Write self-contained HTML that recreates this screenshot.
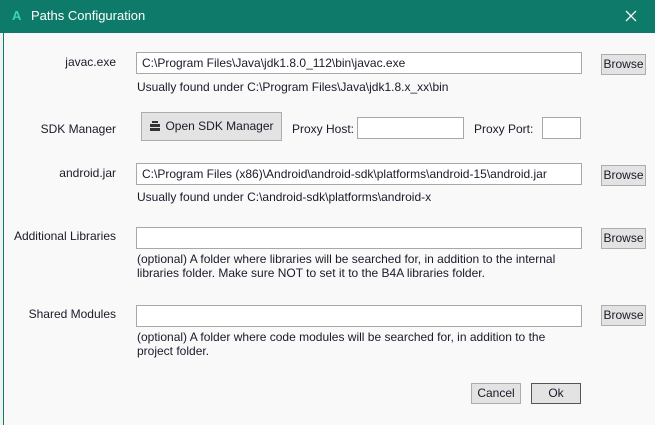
<!DOCTYPE html>
<html><head><meta charset="utf-8"><style>
*{margin:0;padding:0;box-sizing:border-box}
body{width:655px;height:425px;overflow:hidden;background:#f9f9f9;font-family:"Liberation Sans",sans-serif;font-size:12px;color:#1a1a2a;position:relative}
.a{position:absolute;white-space:nowrap}
.title{left:0;top:0;width:655px;height:33px;background:#0e7a69;color:#fff}
.inp{position:absolute;background:#fff;border:1px solid #a8a8a8;height:22px;padding:3px 5px;font-size:12px}
.btn{position:absolute;background:#e3e3e3;border:1px solid #adadad;height:21px;text-align:center;line-height:19px}
.lbl{position:absolute;text-align:right;width:103px;left:13px}
</style></head><body>
<div class="a title">
 <span class="a" style="left:12px;top:8px;font-weight:bold;color:#3ed3b4;font-size:13px">A</span>
 <span class="a" style="left:31px;top:8px;font-size:13px">Paths Configuration</span>
 <svg class="a" style="left:625px;top:10px" width="12" height="12" viewBox="0 0 12 12"><path d="M1 1L11 11M11 1L1 11" stroke="#fff" stroke-width="1.3"/></svg>
</div>
<div class="a" style="left:0;top:33px;width:4px;height:392px;background:#eef2f1;border-right:1px solid #0e7a69"></div>

<div class="lbl" style="top:55px">javac.exe</div>
<div class="inp" style="left:136px;top:52px;width:446px">C:\Program Files\Java\jdk1.8.0_112\bin\javac.exe</div>
<div class="btn" style="left:601px;top:54px;width:45px">Browse</div>
<div class="a" style="left:137px;top:80px">Usually found under C:\Program Files\Java\jdk1.8.x_xx\bin</div>

<div class="lbl" style="top:122px">SDK Manager</div>
<div class="btn" style="left:141px;top:112px;width:141px;height:29px;line-height:27px">
<svg width="12" height="10" viewBox="0 0 12 10" style="vertical-align:-1px;margin-right:4px"><path d="M3 0h6v2H3zM1 3h10v7H1z" fill="#333"/><rect x="1" y="6" width="10" height="1" fill="#e3e3e3"/></svg>Open SDK Manager</div>
<div class="a" style="left:292px;top:122px">Proxy Host:</div>
<div class="inp" style="left:357px;top:117px;width:107px"></div>
<div class="a" style="left:474px;top:122px">Proxy Port:</div>
<div class="inp" style="left:542px;top:117px;width:39px"></div>

<div class="lbl" style="top:166px">android.jar</div>
<div class="inp" style="left:136px;top:163px;width:446px">C:\Program Files (x86)\Android\android-sdk\platforms\android-15\android.jar</div>
<div class="btn" style="left:601px;top:165px;width:45px">Browse</div>
<div class="a" style="left:137px;top:190px">Usually found under C:\android-sdk\platforms\android-x</div>

<div class="lbl" style="top:229px">Additional Libraries</div>
<div class="inp" style="left:136px;top:227px;width:446px"></div>
<div class="btn" style="left:601px;top:228px;width:45px">Browse</div>
<div class="a" style="left:137px;top:252px;line-height:14px">(optional) A folder where libraries will be searched for, in addition to the internal<br>libraries folder. Make sure NOT to set it to the B4A libraries folder.</div>

<div class="lbl" style="top:307px">Shared Modules</div>
<div class="inp" style="left:136px;top:305px;width:446px"></div>
<div class="btn" style="left:601px;top:305px;width:45px">Browse</div>
<div class="a" style="left:137px;top:330px;line-height:14px">(optional) A folder where code modules will be searched for, in addition to the<br>project folder.</div>

<div class="btn" style="left:471px;top:383px;width:50px">Cancel</div>
<div class="btn" style="left:531px;top:383px;width:50px;border-color:#555">Ok</div>
</body></html>
